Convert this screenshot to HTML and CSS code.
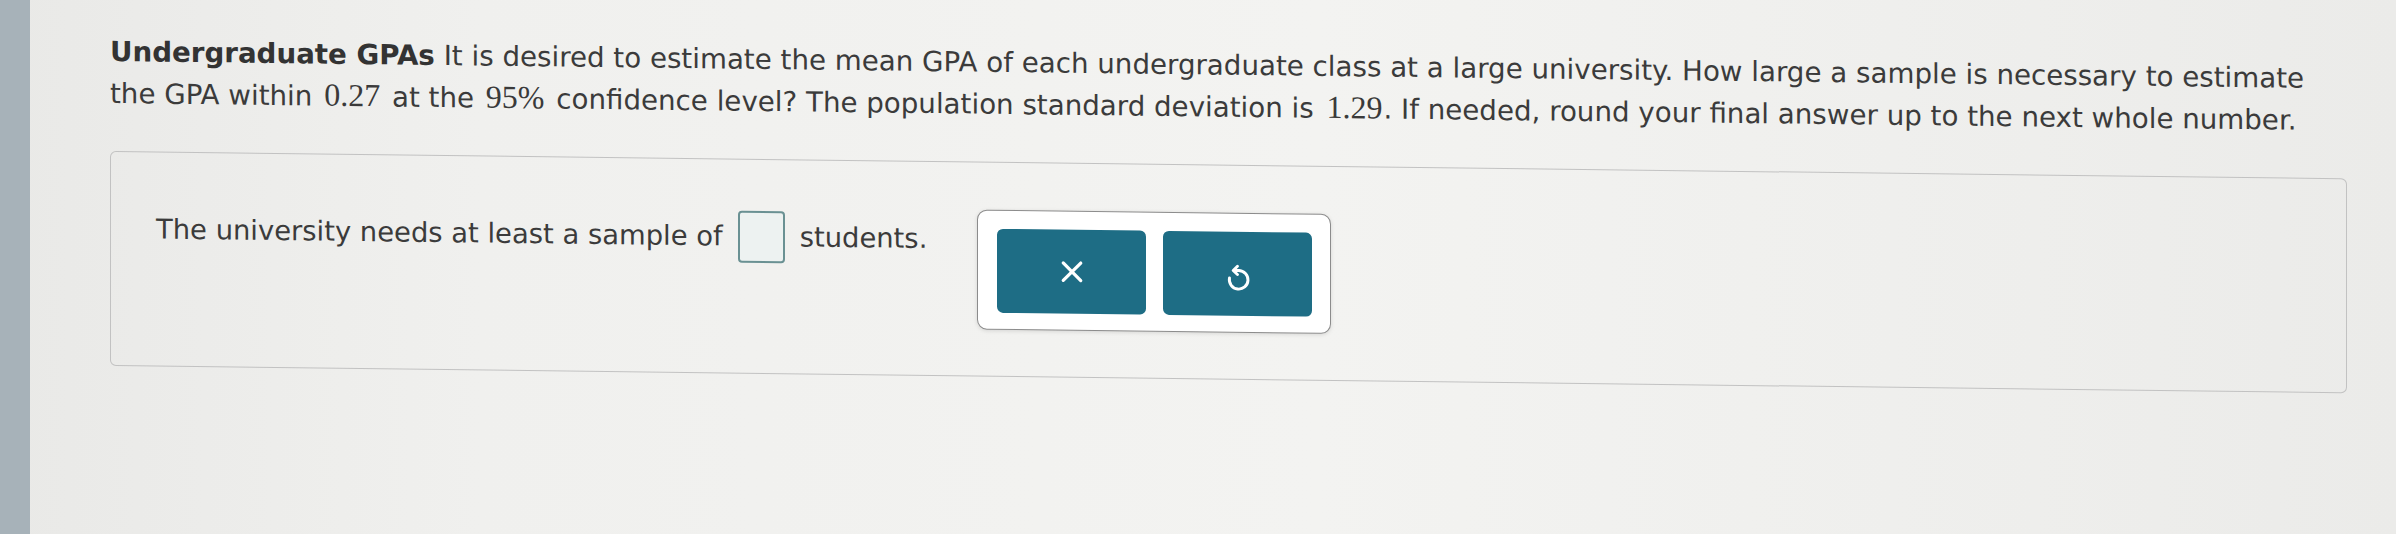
FILE: index.html
```html
<!DOCTYPE html>
<html lang="en">
<head>
<meta charset="utf-8">
<title>Undergraduate GPAs</title>
<link rel="stylesheet" href="styles.css">
</head>
<body>
<div class="page">
  <div class="edge"></div>
  <main class="content">
    <p class="prompt"><strong class="title">Undergraduate GPAs</strong> It is desired to estimate the mean GPA of each undergraduate class at a large university. How large a sample is necessary to estimate the GPA within <span class="num">0.27</span> at the <span class="num">95%</span> confidence level? The population standard deviation is <span class="num num-end">1.29</span>. If needed, round your final answer up to the next whole number.</p>
    <section class="answer-box">
      <div class="answer-row">
        <div class="sentence">
          <span>The university needs at least a sample of</span>
          <span class="input" role="textbox" aria-label="answer"></span>
          <span>students.</span>
        </div>
        <div class="tools">
          <button class="tool-btn" type="button" aria-label="Clear">
            <svg class="icon" viewBox="0 0 24 24" width="30" height="30" aria-hidden="true">
              <path d="M5 5 L19 19 M19 5 L5 19" fill="none" stroke="#ffffff" stroke-width="2.6" stroke-linecap="round"/>
            </svg>
          </button>
          <button class="tool-btn" type="button" aria-label="Undo">
            <svg class="icon undo" viewBox="0 0 24 24" width="32" height="32" aria-hidden="true">
              <path d="M12.5 6.5 A7 7 0 1 1 5.6 12.3" fill="none" stroke="#ffffff" stroke-width="2.2" stroke-linecap="round"/>
              <path d="M12.5 6.5 H8.6 M11.6 3.4 L8.4 6.6 L11.6 9.6" fill="none" stroke="#ffffff" stroke-width="2.2" stroke-linecap="round" stroke-linejoin="round"/>
            </svg>
          </button>
        </div>
      </div>
    </section>
  </main>
</div>
</body>
</html>
```

FILE: styles.css
```css
* { box-sizing: border-box; }

html, body {
  margin: 0;
  padding: 0;
}

body {
  width: 2396px;
  height: 534px;
  overflow: hidden;
  background: linear-gradient(90deg, #e9e9e7 0%, #f0f0ee 20%, #f3f3f1 55%, #eeeeec 85%, #ebebe9 100%);
  font-family: "DejaVu Sans", Verdana, sans-serif;
  color: #3b3b3b;
}

.page {
  display: flex;
  height: 534px;
  overflow: hidden;
}

.edge {
  flex: 0 0 30px;
  background: #a7b2b9;
}

.content {
  flex: 1;
  padding: 30px 0 0 80px;
  transform: skewY(0.7deg);
  transform-origin: 0 0;
}

.prompt {
  margin: 0;
  width: 2208px;
  font-size: 27.7px;
  line-height: 42px;
}

.title {
  font-weight: bold;
  color: #333333;
}

.num {
  font-family: "Liberation Serif", "Times New Roman", serif;
  font-size: 32px;
  line-height: 1;
  margin: 0 3px;
  color: #3a3a3a;
}

.num-end {
  margin: 0 1px 0 4px;
}

.answer-box {
  margin-top: 36px;
  width: 2237px;
  height: 215px;
  border: 1.5px solid #c2c2c2;
  border-radius: 6px;
  padding: 47px 0 0 45px;
}

.answer-row {
  display: flex;
  align-items: flex-start;
  gap: 50px;
}

.sentence {
  display: flex;
  align-items: center;
  gap: 15px;
  font-size: 27.4px;
  line-height: 34px;
  padding-top: 4px;
}

.input {
  display: block;
  width: 47px;
  height: 52px;
  border: 2px solid #6a9193;
  border-radius: 4px;
  background: #edf2f1;
}

.tools {
  display: flex;
  gap: 17px;
  padding: 18px 18px 16px 19px;
  background: #ffffff;
  border: 1.5px solid #8c8c8c;
  border-radius: 10px;
  box-shadow: 0 1px 4px rgba(0, 0, 0, 0.12);
}

.tool-btn {
  width: 149px;
  height: 84px;
  border: none;
  border-radius: 6px;
  background: #1e6d85;
  display: flex;
  align-items: center;
  justify-content: center;
  padding: 0;
  cursor: pointer;
}

.icon {
  display: block;
}

.undo {
  margin-top: 8px;
}
```
